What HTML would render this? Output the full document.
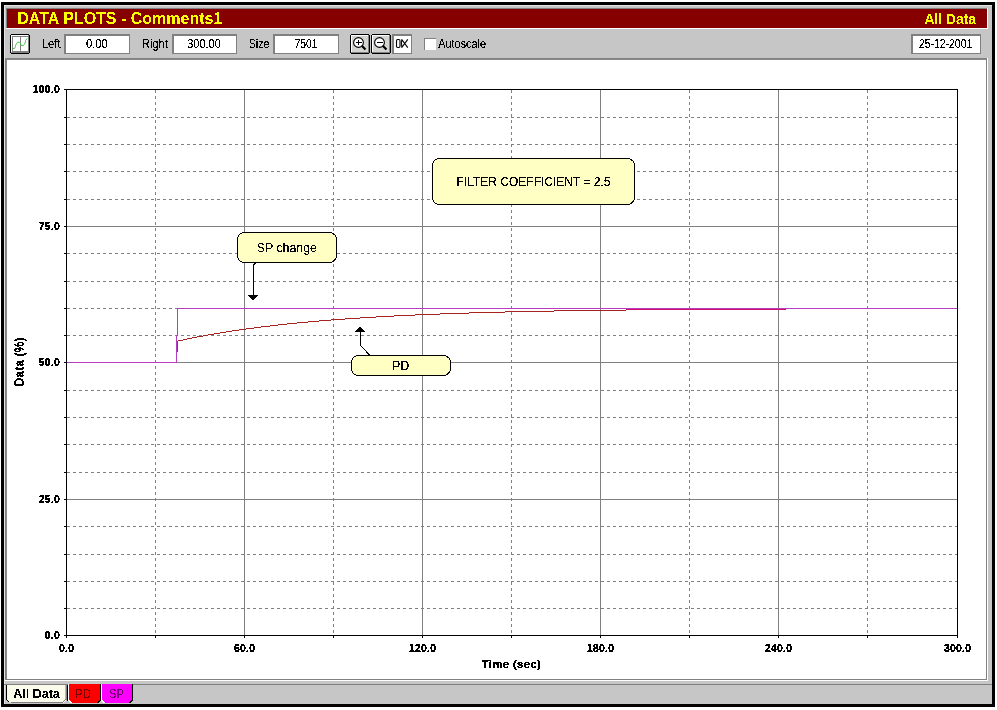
<!DOCTYPE html>
<html><head><meta charset="utf-8"><style>
html,body{margin:0;padding:0;background:#fff;width:997px;height:710px;overflow:hidden}
svg{display:block}
</style></head><body>
<svg width="997" height="710" viewBox="0 0 997 710" shape-rendering="crispEdges">
<defs><filter id="crisp" filterUnits="userSpaceOnUse" x="-1000" y="-1000" width="3000" height="3000" color-interpolation-filters="sRGB"><feComponentTransfer><feFuncA type="discrete" tableValues="0 0 1 1 1"/></feComponentTransfer></filter><filter id="crispb" filterUnits="userSpaceOnUse" x="-1000" y="-1000" width="3000" height="3000" color-interpolation-filters="sRGB"><feComponentTransfer><feFuncA type="discrete" tableValues="0 1 1 1"/></feComponentTransfer></filter><filter id="crispt" filterUnits="userSpaceOnUse" x="-1000" y="-1000" width="3000" height="3000" color-interpolation-filters="sRGB"><feComponentTransfer><feFuncA type="discrete" tableValues="0 1"/></feComponentTransfer></filter></defs><rect x="0" y="0" width="997" height="710" fill="#ffffff"/>
<rect x="1" y="2" width="994" height="705" fill="#000000"/>
<rect x="4" y="5" width="988" height="699" fill="#c6c6c6"/>
<rect x="4" y="5" width="988" height="1" fill="#e4e4e4"/>
<rect x="4" y="5" width="1" height="699" fill="#e4e4e4"/>
<rect x="6" y="8" width="982" height="1" fill="#808080"/>
<rect x="6" y="8" width="1" height="21" fill="#808080"/>
<rect x="6" y="28" width="982" height="1" fill="#ffffff"/>
<rect x="987" y="8" width="1" height="21" fill="#ffffff"/>
<rect x="7" y="9" width="980" height="19" fill="#860000"/>
<text filter="url(#crispt)" x="17.3" y="24" font-family="Liberation Sans, sans-serif" font-weight="bold" font-size="16.5" fill="#ffff00" textLength="205" lengthAdjust="spacingAndGlyphs">DATA PLOTS - Comments1</text>
<text filter="url(#crispt)" x="924.5" y="23.5" font-family="Liberation Sans, sans-serif" font-weight="bold" font-size="14" fill="#ffff00" textLength="51.5" lengthAdjust="spacingAndGlyphs">All Data</text>
<rect x="11" y="34" width="18" height="1" fill="#000"/>
<rect x="11" y="53" width="18" height="1" fill="#000"/>
<rect x="10" y="35" width="1" height="18" fill="#000"/>
<rect x="29" y="35" width="1" height="18" fill="#000"/>
<rect x="11" y="35" width="18" height="18" fill="#c6c6c6"/>
<rect x="11" y="35" width="17" height="1" fill="#ffffff"/>
<rect x="11" y="35" width="1" height="17" fill="#ffffff"/>
<rect x="11" y="52" width="18" height="1" fill="#808080"/>
<rect x="28" y="35" width="1" height="18" fill="#808080"/>
<rect x="12" y="36" width="17" height="17" fill="#808080"/>
<rect x="13" y="37" width="15" height="14" fill="#ffffff"/>
<rect x="20" y="37" width="1" height="14" fill="#808080"/>
<polyline points="13,48.5 14.5,48.5 15.5,46.5 15.5,45.5 16.5,43.8 17.5,42.2 19.5,42.2 20.5,43.5 20.8,45.3 23.2,45.5 24.3,44.5 25.2,42.8 25.6,40.5 27.3,38.4" fill="none" stroke="#48c048" stroke-width="1" shape-rendering="geometricPrecision"/>
<text filter="url(#crisp)" x="41.7" y="48" font-family="Liberation Sans, sans-serif" font-size="12" font-weight="normal" fill="#000" text-anchor="start" textLength="18.900000000000002" lengthAdjust="spacingAndGlyphs">Left</text>
<rect x="64" y="34" width="66" height="20" fill="#808080"/>
<rect x="66" y="36" width="63" height="17" fill="#ffffff"/>
<text filter="url(#crisp)" x="86.0" y="48" font-family="Liberation Sans, sans-serif" font-size="12" font-weight="normal" fill="#000" text-anchor="start" textLength="21.8" lengthAdjust="spacingAndGlyphs">0.00</text>
<text filter="url(#crisp)" x="142.0" y="48" font-family="Liberation Sans, sans-serif" font-size="12" font-weight="normal" fill="#000" text-anchor="start" textLength="25.8" lengthAdjust="spacingAndGlyphs">Right</text>
<rect x="172" y="34" width="65" height="20" fill="#808080"/>
<rect x="174" y="36" width="62" height="17" fill="#ffffff"/>
<text filter="url(#crisp)" x="187.2" y="48" font-family="Liberation Sans, sans-serif" font-size="12" font-weight="normal" fill="#000" text-anchor="start" textLength="33.6" lengthAdjust="spacingAndGlyphs">300.00</text>
<text filter="url(#crisp)" x="248.7" y="48" font-family="Liberation Sans, sans-serif" font-size="12" font-weight="normal" fill="#000" text-anchor="start" textLength="20.900000000000002" lengthAdjust="spacingAndGlyphs">Size</text>
<rect x="273" y="34" width="66" height="20" fill="#808080"/>
<rect x="275" y="36" width="63" height="17" fill="#ffffff"/>
<text filter="url(#crisp)" x="294.5" y="48" font-family="Liberation Sans, sans-serif" font-size="12" font-weight="normal" fill="#000" text-anchor="start" textLength="23.1" lengthAdjust="spacingAndGlyphs">7501</text>
<rect x="351" y="34" width="18" height="1" fill="#000"/>
<rect x="351" y="53" width="18" height="1" fill="#000"/>
<rect x="350" y="35" width="1" height="18" fill="#000"/>
<rect x="369" y="35" width="1" height="18" fill="#000"/>
<rect x="351" y="35" width="18" height="18" fill="#d4d4d0"/>
<rect x="351" y="35" width="17" height="1" fill="#ffffff"/>
<rect x="351" y="35" width="1" height="17" fill="#ffffff"/>
<rect x="351" y="52" width="18" height="1" fill="#808080"/>
<rect x="368" y="35" width="1" height="18" fill="#808080"/>
<circle cx="358.5" cy="42.5" r="4.9" fill="#ffffff" stroke="#000" stroke-width="1.1" shape-rendering="geometricPrecision"/>
<rect x="356" y="42" width="6" height="1" fill="#000"/>
<rect x="358" y="40" width="1" height="5" fill="#000"/>
<line x1="361.7" y1="45.7" x2="365.5" y2="49.5" stroke="#000" stroke-width="2.2" shape-rendering="geometricPrecision"/>
<rect x="372" y="34" width="18" height="1" fill="#000"/>
<rect x="372" y="53" width="18" height="1" fill="#000"/>
<rect x="371" y="35" width="1" height="18" fill="#000"/>
<rect x="390" y="35" width="1" height="18" fill="#000"/>
<rect x="372" y="35" width="18" height="18" fill="#d4d4d0"/>
<rect x="372" y="35" width="17" height="1" fill="#ffffff"/>
<rect x="372" y="35" width="1" height="17" fill="#ffffff"/>
<rect x="372" y="52" width="18" height="1" fill="#808080"/>
<rect x="389" y="35" width="1" height="18" fill="#808080"/>
<circle cx="379.5" cy="42.5" r="4.9" fill="#ffffff" stroke="#000" stroke-width="1.1" shape-rendering="geometricPrecision"/>
<rect x="377" y="42" width="6" height="1" fill="#000"/>
<line x1="382.7" y1="45.7" x2="386.5" y2="49.5" stroke="#000" stroke-width="2.2" shape-rendering="geometricPrecision"/>
<rect x="392" y="34" width="20" height="20" fill="#808080"/>
<rect x="394" y="36" width="17" height="17" fill="#ffffff"/>
<rect x="396.5" y="39.5" width="3.5" height="8" rx="1.2" fill="none" stroke="#000" stroke-width="1.1" shape-rendering="geometricPrecision"/>
<path d="M401.9,39.2 Q400.9,43.5 401.9,47.8 M402.2,40.2 L407.8,47.6 M407.8,39.3 L402.2,46.8" fill="none" stroke="#000" stroke-width="1.1" shape-rendering="geometricPrecision"/>
<rect x="424" y="38" width="12" height="12" fill="#808080"/>
<rect x="425" y="39" width="11" height="11" fill="#ffffff"/>
<text filter="url(#crisp)" x="438.2" y="47.6" font-family="Liberation Sans, sans-serif" font-size="12" font-weight="normal" fill="#000" text-anchor="start" textLength="47.800000000000004" lengthAdjust="spacingAndGlyphs">Autoscale</text>
<rect x="911" y="34" width="70" height="20" fill="#808080"/>
<rect x="913" y="36" width="67" height="17" fill="#ffffff"/>
<text filter="url(#crisp)" x="918.9000000000001" y="48" font-family="Liberation Sans, sans-serif" font-size="12" font-weight="normal" fill="#000" text-anchor="start" textLength="53.4" lengthAdjust="spacingAndGlyphs">25-12-2001</text>
<rect x="5" y="58" width="982" height="1" fill="#808080"/>
<rect x="5" y="59" width="982" height="1" fill="#8a8a8a"/>
<rect x="5" y="58" width="1" height="622" fill="#808080"/>
<rect x="6" y="58" width="1" height="622" fill="#8a8a8a"/>
<rect x="7" y="60" width="979" height="619" fill="#ffffff"/>
<rect x="5" y="679" width="982" height="1" fill="#808080"/>
<rect x="986" y="58" width="1" height="622" fill="#808080"/>
<rect x="5" y="680" width="983" height="1" fill="#ffffff"/>
<rect x="987" y="58" width="1" height="623" fill="#ffffff"/>
<rect x="4" y="684" width="988" height="1" fill="#808080"/>
<line x1="155.5" y1="90" x2="155.5" y2="635" stroke="#808080" stroke-width="1" stroke-dasharray="3 3" shape-rendering="crispEdges"/>
<rect x="155" y="636" width="1" height="2" fill="#000"/>
<rect x="244" y="90" width="1" height="545" fill="#808080"/>
<rect x="244" y="636" width="1" height="2" fill="#000"/>
<line x1="333.5" y1="90" x2="333.5" y2="635" stroke="#808080" stroke-width="1" stroke-dasharray="3 3" shape-rendering="crispEdges"/>
<rect x="333" y="636" width="1" height="2" fill="#000"/>
<rect x="422" y="90" width="1" height="545" fill="#808080"/>
<rect x="422" y="636" width="1" height="2" fill="#000"/>
<line x1="511.5" y1="90" x2="511.5" y2="635" stroke="#808080" stroke-width="1" stroke-dasharray="3 3" shape-rendering="crispEdges"/>
<rect x="511" y="636" width="1" height="2" fill="#000"/>
<rect x="600" y="90" width="1" height="545" fill="#808080"/>
<rect x="600" y="636" width="1" height="2" fill="#000"/>
<line x1="689.5" y1="90" x2="689.5" y2="635" stroke="#808080" stroke-width="1" stroke-dasharray="3 3" shape-rendering="crispEdges"/>
<rect x="689" y="636" width="1" height="2" fill="#000"/>
<rect x="778" y="90" width="1" height="545" fill="#808080"/>
<rect x="778" y="636" width="1" height="2" fill="#000"/>
<line x1="867.5" y1="90" x2="867.5" y2="635" stroke="#808080" stroke-width="1" stroke-dasharray="3 3" shape-rendering="crispEdges"/>
<rect x="867" y="636" width="1" height="2" fill="#000"/>
<line x1="67" y1="608.5" x2="958" y2="608.5" stroke="#808080" stroke-width="1" stroke-dasharray="3 3" shape-rendering="crispEdges"/>
<rect x="64" y="608" width="2" height="1" fill="#000"/>
<line x1="67" y1="581.5" x2="958" y2="581.5" stroke="#808080" stroke-width="1" stroke-dasharray="3 3" shape-rendering="crispEdges"/>
<rect x="64" y="581" width="2" height="1" fill="#000"/>
<line x1="67" y1="554.5" x2="958" y2="554.5" stroke="#808080" stroke-width="1" stroke-dasharray="3 3" shape-rendering="crispEdges"/>
<rect x="64" y="554" width="2" height="1" fill="#000"/>
<line x1="67" y1="526.5" x2="958" y2="526.5" stroke="#808080" stroke-width="1" stroke-dasharray="3 3" shape-rendering="crispEdges"/>
<rect x="64" y="526" width="2" height="1" fill="#000"/>
<rect x="67" y="499" width="890" height="1" fill="#808080"/>
<rect x="64" y="499" width="2" height="1" fill="#000"/>
<line x1="67" y1="472.5" x2="958" y2="472.5" stroke="#808080" stroke-width="1" stroke-dasharray="3 3" shape-rendering="crispEdges"/>
<rect x="64" y="472" width="2" height="1" fill="#000"/>
<line x1="67" y1="444.5" x2="958" y2="444.5" stroke="#808080" stroke-width="1" stroke-dasharray="3 3" shape-rendering="crispEdges"/>
<rect x="64" y="444" width="2" height="1" fill="#000"/>
<line x1="67" y1="417.5" x2="958" y2="417.5" stroke="#808080" stroke-width="1" stroke-dasharray="3 3" shape-rendering="crispEdges"/>
<rect x="64" y="417" width="2" height="1" fill="#000"/>
<line x1="67" y1="390.5" x2="958" y2="390.5" stroke="#808080" stroke-width="1" stroke-dasharray="3 3" shape-rendering="crispEdges"/>
<rect x="64" y="390" width="2" height="1" fill="#000"/>
<rect x="67" y="362" width="890" height="1" fill="#808080"/>
<rect x="64" y="362" width="2" height="1" fill="#000"/>
<line x1="67" y1="335.5" x2="958" y2="335.5" stroke="#808080" stroke-width="1" stroke-dasharray="3 3" shape-rendering="crispEdges"/>
<rect x="64" y="335" width="2" height="1" fill="#000"/>
<line x1="67" y1="308.5" x2="958" y2="308.5" stroke="#808080" stroke-width="1" stroke-dasharray="3 3" shape-rendering="crispEdges"/>
<rect x="64" y="308" width="2" height="1" fill="#000"/>
<line x1="67" y1="281.5" x2="958" y2="281.5" stroke="#808080" stroke-width="1" stroke-dasharray="3 3" shape-rendering="crispEdges"/>
<rect x="64" y="281" width="2" height="1" fill="#000"/>
<line x1="67" y1="253.5" x2="958" y2="253.5" stroke="#808080" stroke-width="1" stroke-dasharray="3 3" shape-rendering="crispEdges"/>
<rect x="64" y="253" width="2" height="1" fill="#000"/>
<rect x="67" y="226" width="890" height="1" fill="#808080"/>
<rect x="64" y="226" width="2" height="1" fill="#000"/>
<line x1="67" y1="199.5" x2="958" y2="199.5" stroke="#808080" stroke-width="1" stroke-dasharray="3 3" shape-rendering="crispEdges"/>
<rect x="64" y="199" width="2" height="1" fill="#000"/>
<line x1="67" y1="171.5" x2="958" y2="171.5" stroke="#808080" stroke-width="1" stroke-dasharray="3 3" shape-rendering="crispEdges"/>
<rect x="64" y="171" width="2" height="1" fill="#000"/>
<line x1="67" y1="144.5" x2="958" y2="144.5" stroke="#808080" stroke-width="1" stroke-dasharray="3 3" shape-rendering="crispEdges"/>
<rect x="64" y="144" width="2" height="1" fill="#000"/>
<line x1="67" y1="117.5" x2="958" y2="117.5" stroke="#808080" stroke-width="1" stroke-dasharray="3 3" shape-rendering="crispEdges"/>
<rect x="64" y="117" width="2" height="1" fill="#000"/>
<rect x="64" y="89" width="894" height="1" fill="#000"/>
<rect x="64" y="635" width="894" height="1" fill="#000"/>
<rect x="66" y="89" width="1" height="549" fill="#000"/>
<rect x="957" y="89" width="1" height="549" fill="#000"/>
<text filter="url(#crispb)" x="32.8" y="93" font-family="Liberation Sans, sans-serif" font-size="10.3" font-weight="bold" textLength="27" lengthAdjust="spacing">100.0</text>
<text filter="url(#crispb)" x="38.8" y="230" font-family="Liberation Sans, sans-serif" font-size="10.3" font-weight="bold" textLength="21" lengthAdjust="spacing">75.0</text>
<text filter="url(#crispb)" x="38.8" y="366" font-family="Liberation Sans, sans-serif" font-size="10.3" font-weight="bold" textLength="21" lengthAdjust="spacing">50.0</text>
<text filter="url(#crispb)" x="38.8" y="503" font-family="Liberation Sans, sans-serif" font-size="10.3" font-weight="bold" textLength="21" lengthAdjust="spacing">25.0</text>
<text filter="url(#crispb)" x="44.8" y="639" font-family="Liberation Sans, sans-serif" font-size="10.3" font-weight="bold" textLength="15" lengthAdjust="spacing">0.0</text>
<text filter="url(#crispb)" x="59.0" y="652" font-family="Liberation Sans, sans-serif" font-size="10.3" font-weight="bold" textLength="15" lengthAdjust="spacing">0.0</text>
<text filter="url(#crispb)" x="234.0" y="652" font-family="Liberation Sans, sans-serif" font-size="10.3" font-weight="bold" textLength="21" lengthAdjust="spacing">60.0</text>
<text filter="url(#crispb)" x="409.0" y="652" font-family="Liberation Sans, sans-serif" font-size="10.3" font-weight="bold" textLength="27" lengthAdjust="spacing">120.0</text>
<text filter="url(#crispb)" x="587.0" y="652" font-family="Liberation Sans, sans-serif" font-size="10.3" font-weight="bold" textLength="27" lengthAdjust="spacing">180.0</text>
<text filter="url(#crispb)" x="765.0" y="652" font-family="Liberation Sans, sans-serif" font-size="10.3" font-weight="bold" textLength="27" lengthAdjust="spacing">240.0</text>
<text filter="url(#crispb)" x="944.0" y="652" font-family="Liberation Sans, sans-serif" font-size="10.3" font-weight="bold" textLength="27" lengthAdjust="spacing">300.0</text>
<text filter="url(#crispb)" x="481.8" y="668" font-family="Liberation Sans, sans-serif" font-size="11.2" font-weight="bold" textLength="59" lengthAdjust="spacing">Time (sec)</text>
<text filter="url(#crisp)" transform="translate(23.5,362) rotate(-90)" x="0" y="0" font-family="Liberation Sans, sans-serif" font-size="13.2" font-weight="bold" text-anchor="middle" textLength="49" lengthAdjust="spacingAndGlyphs">Data (%)</text>
<rect x="67" y="362" width="110" height="1" fill="#b83cc0"/>
<rect x="176" y="335" width="1" height="28" fill="#b83cc0"/>
<rect x="177" y="308" width="1" height="28" fill="#b83cc0"/>
<rect x="178" y="308" width="779" height="1" fill="#b83cc0"/>
<rect x="178" y="340" width="5" height="1" fill="#a82222"/>
<rect x="183" y="339" width="4" height="1" fill="#a82222"/>
<rect x="187" y="338" width="5" height="1" fill="#a82222"/>
<rect x="192" y="337" width="5" height="1" fill="#a82222"/>
<rect x="197" y="336" width="6" height="1" fill="#a82222"/>
<rect x="203" y="335" width="5" height="1" fill="#a82222"/>
<rect x="208" y="334" width="6" height="1" fill="#a82222"/>
<rect x="214" y="333" width="6" height="1" fill="#a82222"/>
<rect x="220" y="332" width="6" height="1" fill="#a82222"/>
<rect x="226" y="331" width="6" height="1" fill="#a82222"/>
<rect x="232" y="330" width="7" height="1" fill="#a82222"/>
<rect x="239" y="329" width="7" height="1" fill="#a82222"/>
<rect x="246" y="328" width="8" height="1" fill="#a82222"/>
<rect x="254" y="327" width="7" height="1" fill="#a82222"/>
<rect x="261" y="326" width="9" height="1" fill="#a82222"/>
<rect x="270" y="325" width="8" height="1" fill="#a82222"/>
<rect x="278" y="324" width="9" height="1" fill="#a82222"/>
<rect x="287" y="323" width="10" height="1" fill="#a82222"/>
<rect x="297" y="322" width="11" height="1" fill="#a82222"/>
<rect x="308" y="321" width="11" height="1" fill="#a82222"/>
<rect x="319" y="320" width="12" height="1" fill="#a82222"/>
<rect x="331" y="319" width="14" height="1" fill="#a82222"/>
<rect x="345" y="318" width="15" height="1" fill="#a82222"/>
<rect x="360" y="317" width="16" height="1" fill="#a82222"/>
<rect x="376" y="316" width="18" height="1" fill="#a82222"/>
<rect x="394" y="315" width="21" height="1" fill="#a82222"/>
<rect x="415" y="314" width="25" height="1" fill="#a82222"/>
<rect x="440" y="313" width="29" height="1" fill="#a82222"/>
<rect x="469" y="312" width="36" height="1" fill="#a82222"/>
<rect x="505" y="311" width="49" height="1" fill="#a82222"/>
<rect x="554" y="310" width="72" height="1" fill="#a82222"/>
<rect x="626" y="309" width="160" height="1" fill="#d0106a"/>
<rect x="177" y="341" width="1" height="11" fill="#d0106a"/>
<rect x="432.5" y="158.5" width="202" height="46" rx="7" ry="7" fill="#ffffc4" stroke="#000" stroke-width="1"/>
<text filter="url(#crisp)" x="456.59999999999997" y="186" font-family="Liberation Sans, sans-serif" font-size="12" font-weight="normal" fill="#000" text-anchor="start" textLength="153.79999999999998" lengthAdjust="spacingAndGlyphs">FILTER COEFFICIENT = 2.5</text>
<rect x="237.5" y="232.5" width="99" height="30" rx="7" ry="7" fill="#ffffc4" stroke="#000" stroke-width="1"/>
<text filter="url(#crisp)" x="256.7" y="252" font-family="Liberation Sans, sans-serif" font-size="12" font-weight="normal" fill="#000" text-anchor="start" textLength="60.300000000000004" lengthAdjust="spacingAndGlyphs">SP change</text>
<path d="M255.5,263 L253.5,265 L253.5,295" fill="none" stroke="#000" stroke-width="1"/>
<path d="M248,295 L258.5,295 L253.2,300.5 Z" fill="#000"/>
<rect x="351.5" y="355.5" width="99" height="20" rx="7" ry="7" fill="#ffffc4" stroke="#000" stroke-width="1"/>
<text filter="url(#crisp)" x="391.9" y="370" font-family="Liberation Sans, sans-serif" font-size="12" font-weight="normal" fill="#000" text-anchor="start" textLength="17.3" lengthAdjust="spacingAndGlyphs">PD</text>
<path d="M370,355.5 L360.5,345.5 L360.5,331.5" fill="none" stroke="#000" stroke-width="1"/>
<path d="M355,332 L365.5,332 L360.2,326.5 Z" fill="#000"/>
<path d="M6,685 L66,685 L66,700 L63,703 L10,703 L6,699 Z" fill="#fbfbec"/>
<rect x="6" y="685" width="1" height="15" fill="#000"/>
<path d="M6.5,699.5 L9.5,702.5" stroke="#000" stroke-width="1"/>
<rect x="11" y="702" width="52" height="1" fill="#808080"/>
<rect x="66" y="685" width="1" height="15" fill="#808080"/>
<rect x="65" y="685" width="1" height="15" fill="#b8b8b8"/>
<path d="M65.5,699.5 L62.5,702.5" stroke="#808080" stroke-width="1"/>
<rect x="67" y="685" width="1" height="16" fill="#000"/>
<text filter="url(#crisp)" class="reg" x="13.2" y="698" font-family="Liberation Sans, sans-serif" font-size="12" font-weight="bold" textLength="46.6" lengthAdjust="spacingAndGlyphs">All Data</text>
<path d="M68,684 L100,684 L100,700 L97,703 L72,703 L68,699 Z" fill="#ff0000"/>
<rect x="68" y="684" width="1" height="17" fill="#ffffff"/>
<path d="M68.5,700 L71.5,703" stroke="#ffffff" stroke-width="1"/>
<rect x="100" y="684" width="1" height="17" fill="#000"/>
<path d="M100.5,700 L97.5,703" stroke="#000" stroke-width="1"/>
<text filter="url(#crisp)" x="75.2" y="697.6" font-family="Liberation Sans, sans-serif" font-size="12" font-weight="normal" fill="#7a0000" text-anchor="start" textLength="15.799999999999999" lengthAdjust="spacingAndGlyphs">PD</text>
<path d="M101,684 L132,684 L132,700 L129,703 L105,703 L101,699 Z" fill="#ff00ff"/>
<rect x="101" y="684" width="1" height="17" fill="#ffffff"/>
<path d="M101.5,700 L104.5,703" stroke="#ffffff" stroke-width="1"/>
<rect x="132" y="684" width="1" height="17" fill="#000"/>
<path d="M132.5,700 L129.5,703" stroke="#000" stroke-width="1"/>
<text filter="url(#crisp)" x="109.0" y="697.6" font-family="Liberation Sans, sans-serif" font-size="12" font-weight="normal" fill="#700070" text-anchor="start" textLength="14.9" lengthAdjust="spacingAndGlyphs">SP</text>
</svg>
</body></html>
